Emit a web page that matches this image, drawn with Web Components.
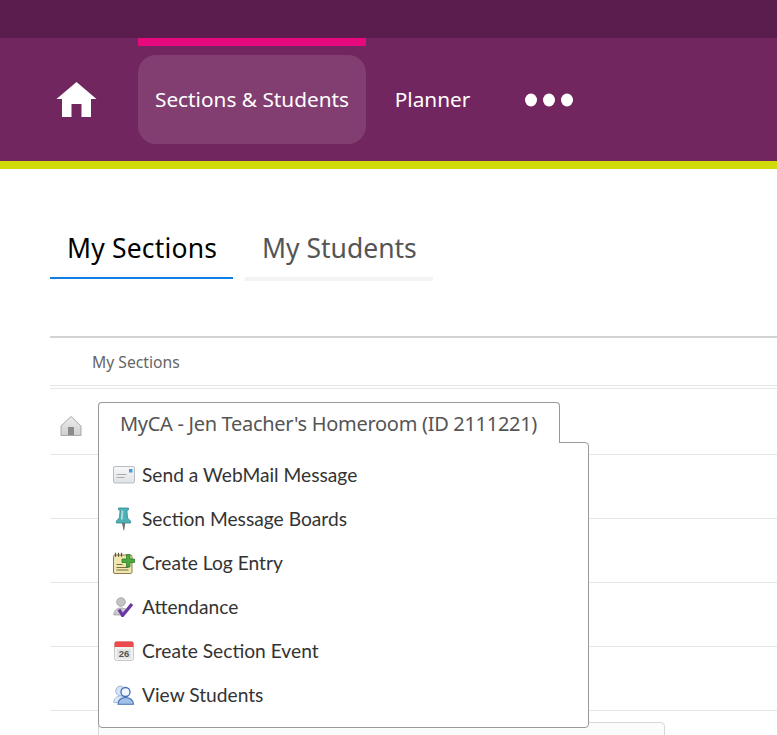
<!DOCTYPE html>
<html lang="en"><head><meta charset="utf-8"><title>My Sections</title>
<style>html,body{margin:0;padding:0;background:#fff;overflow:hidden;height:735px}</style></head>
<body>
<site-header>
  <nav-item type="home" label="Home"></nav-item>
  <nav-item active>Sections &amp; Students</nav-item>
  <nav-item>Planner</nav-item>
  <nav-item type="more" label="More"></nav-item>
</site-header>
<page-tabs>
  <tab-item active>My Sections</tab-item>
  <tab-item>My Students</tab-item>
</page-tabs>
<section-list heading="My Sections">
  <section-row home>
    <section-popup title-text="MyCA - Jen Teacher's Homeroom (ID 2111221)">
      <popup-item icon="mail">Send a WebMail Message</popup-item>
      <popup-item icon="pin">Section Message Boards</popup-item>
      <popup-item icon="log">Create Log Entry</popup-item>
      <popup-item icon="attend">Attendance</popup-item>
      <popup-item icon="cal">Create Section Event</popup-item>
      <popup-item icon="students">View Students</popup-item>
    </section-popup>
  </section-row>
  <section-row></section-row>
  <section-row></section-row>
  <section-row></section-row>
  <section-row></section-row>
  <section-row peek></section-row>
</section-list>
<script>
function shadow(el, html){ el.attachShadow({mode:'open'}).innerHTML = html; }

const ICONS = {
 mail:`<svg viewBox="0 0 22 18" width="22" height="18"><defs><linearGradient id="m" x1="0" y1="0" x2="0" y2="1"><stop offset="0" stop-color="#f7f8f9"/><stop offset="1" stop-color="#dfe2e5"/></linearGradient></defs><rect x=".5" y=".5" width="21" height="16.500" rx="1.500" fill="url(#m)" stroke="#b9bdc1"/><path d="M3.500 8.500h10M3.500 11.500h8" stroke="#a9adb2" fill="none"/><rect x="16" y="3" width="3.500" height="3.500" fill="#4a9be0"/></svg>`,
 pin:`<svg viewBox="0 0 18 24" width="18" height="24"><path d="M3.500 1h10v1.800l-1.600 1 .7 7.200 3 3.200v1.800H1.400V14l3-3.200.7-7.200-1.600-1z" fill="#4fb0b5" stroke="#2f8b92" stroke-width=".8"/><path d="M6.500 3.500h1.800l-.4 9H5.800z" fill="#a5dcdd"/><path d="M7 16h3.200L9.200 23.500h-.6z" fill="#6d6f72"/></svg>`,
 log:`<svg viewBox="0 0 22 22" width="22" height="22"><rect x=".5" y="3" width="18.500" height="18.500" rx="1.500" fill="#f0e6b0" stroke="#8f7a4d"/><path d="M2.500 .8v4M5.500 .8v4M8.500 .8v4" stroke="#5f5434" stroke-width="1.200"/><path d="M3.500 12.500h6M3.500 15.500h12M3.500 18h12" stroke="#77703f"/><path d="M13.500 2.500h3.500v4.500h4.500v3.500H17V15h-3.500v-4.500H9V7h4.500z" fill="#4aa93f" stroke="#2e7f2b" stroke-width=".8"/></svg>`,
 attend:`<svg viewBox="0 0 22 20" width="22" height="20"><circle cx="8" cy="5" r="4.300" fill="#c4c4c4" stroke="#949494" stroke-width=".7"/><path d="M.8 18c0-5 3-7 7.200-7s6 1.500 6.500 3l-4 4z" fill="#c9c9c9" stroke="#9b9b9b" stroke-width=".7"/><path d="M6 12.500l3.600 6L19 7" fill="none" stroke="#6a35a5" stroke-width="3.200"/></svg>`,
 cal:`<svg viewBox="0 0 20 20" width="20" height="20"><rect x=".5" y=".5" width="19" height="19" rx="2" fill="#f1f1f1" stroke="#c9c9c9"/><path d="M.5 6V2.500a2 2 0 0 1 2-2h15a2 2 0 0 1 2 2V6z" fill="#ed4b4b"/><rect x="3" y="8" width="14" height="9.500" fill="#e3e3e3"/><text x="10" y="16" text-anchor="middle" font-family="'Liberation Sans',sans-serif" font-weight="700" font-size="9.500" fill="#555">26</text></svg>`,
 students:`<svg viewBox="0 0 22 20" width="22" height="20"><circle cx="7.500" cy="6" r="4.800" fill="#d6e3f5" stroke="#9fb6d8"/><path d="M.8 17.500c0-4 3-6.500 6.500-6.500s5 2 5 6.500z" fill="#dde8f7" stroke="#a8bddc"/><circle cx="12.500" cy="7" r="4.500" fill="#f2f6fc" stroke="#3f6fb8" stroke-width="1.300"/><path d="M5 19.300c0-4.500 3.500-6.800 7.500-6.800S20.500 14.800 20.500 19.300z" fill="#a3c0e8" stroke="#3f6fb8" stroke-width="1.100"/></svg>`
};

customElements.define('site-header', class extends HTMLElement{
  constructor(){super();shadow(this,`<style>
   :host{display:block;background:#72265f;border-bottom:8px solid #d0d90a;border-top:38px solid #5b1c4e;font-family:"Noto Sans","Open Sans",sans-serif}
   nav{display:flex;height:123px;padding-left:40px;box-sizing:border-box}
  </style><nav><slot></slot></nav>`);}
});

customElements.define('nav-item', class extends HTMLElement{
  constructor(){super();
   const t=this.getAttribute('type');
   let inner='<span class="t"><slot></slot></span>';
   if(t==='home') inner=`<svg role="img" aria-label="Home" width="41" height="35" viewBox="0 0 41 35"><path d="M20.500 0L40.500 17H35V35H25.500V22H15.500V35H6V17H.5z" fill="#fff"/></svg>`;
   if(t==='more') inner=`<svg role="img" aria-label="More" width="50" height="14" viewBox="0 0 50 14"><ellipse cx="6" cy="7" rx="6" ry="6.500" fill="#fff"/><ellipse cx="24" cy="7" rx="6" ry="6.500" fill="#fff"/><ellipse cx="42" cy="7" rx="6" ry="6.500" fill="#fff"/></svg>`;
   shadow(this,`<style>
   :host{display:block;position:relative;color:#fff;font-size:20.800px;white-space:nowrap}
   .pill{display:flex;align-items:center;justify-content:center;box-sizing:border-box;height:89px;margin-top:17px;border-radius:18px}
   .t{display:block;margin-top:-2px}
   svg{display:block}
   :host([active]) .pill{background:rgba(255,255,255,.115);width:228px}
   :host([active])::before{content:"";display:block;position:absolute;left:0;right:0;top:0;height:8px;background:#e6097d}
   :host([type=home]) .pill{width:73px;margin-right:25px}
   :host(:not([active]):not([type])) .pill{width:75px;margin:17px 55px 0 29px}
   :host([type=more]) .pill{width:50px}
   </style><div class="pill">${inner}</div>`);}
});

customElements.define('page-tabs', class extends HTMLElement{
  constructor(){super();shadow(this,`<style>
   :host{display:flex;gap:12px;padding:54px 0 0 50px;height:58px;font-family:"Noto Sans","Open Sans",sans-serif}
  </style><slot></slot>`);}
});

customElements.define('tab-item', class extends HTMLElement{
  constructor(){super();shadow(this,`<style>
   :host{display:block;box-sizing:border-box;height:58px;padding:0 17px;line-height:50px;font-size:26.500px;color:#555;border-bottom:4px solid #f3f3f3;width:188px;white-space:nowrap}
   :host([active]){color:#000;border-bottom:2px solid #0f7ee6;height:56px;width:183px;letter-spacing:.18px}
  </style><slot></slot>`);}
});

customElements.define('section-list', class extends HTMLElement{
  constructor(){super();shadow(this,`<style>
   :host{display:block;margin:55px 0 0 50px;border-top:2px solid #d2d2d2}
   h2{margin:0;height:48px;box-sizing:border-box;padding-left:42px;font:400 15.700px/49px "Noto Sans","Open Sans",sans-serif;color:#666;border-bottom:1px solid #e6e6e6}
   .gap{height:2px;border-bottom:1px solid #e6e6e6}
  </style><h2></h2><div class="gap"></div><slot></slot>`);
  this.shadowRoot.querySelector('h2').textContent=this.getAttribute('heading');}
});

customElements.define('section-row', class extends HTMLElement{
  constructor(){super();
   shadow(this,`<style>
   :host{display:block;position:relative;box-sizing:border-box;height:64px;border-bottom:1px solid #e6e6e6}
   :host(:first-of-type){height:66px}
   svg{position:absolute;left:10px;top:26px}
   .peek{position:absolute;left:48px;top:11px;width:567px;height:40px;box-sizing:border-box;border:1px solid #d8d8d8;border-radius:4px;background:#fcfcfc}
   :host([peek]){border:0;height:24px;overflow:hidden}
   </style>${this.hasAttribute('home')?`<svg width="22" height="22" viewBox="0 0 22 22" aria-hidden="true"><defs><linearGradient id="h" x1="0" y1="0" x2="0" y2="1"><stop offset="0" stop-color="#ededed"/><stop offset="1" stop-color="#cfcfcf"/></linearGradient></defs><path d="M11 1.500L21 11v9.500H1V11z" fill="url(#h)" stroke="#a9a9a9"/><rect x="8" y="12" width="6" height="8" fill="#8a8a8a"/></svg>`:''}${this.hasAttribute('peek')?'<div class="peek"></div>':''}<slot></slot>`);}
});

customElements.define('section-popup', class extends HTMLElement{
  constructor(){super();shadow(this,`<style>
   :host{display:block;position:absolute;left:48px;top:13px;width:491px;z-index:2}
   .title{position:relative;z-index:1;box-sizing:border-box;width:462px;height:41px;margin-bottom:-1px;padding-left:21px;background:#fff;border:1px solid #999;border-bottom:0;border-radius:4px 4px 0 0;font:400 20px/41px "Noto Sans","Open Sans",sans-serif;letter-spacing:-.3px;color:#555;white-space:nowrap}
   .menu{box-sizing:border-box;height:286px;padding-top:10px;background:#fff;border:1px solid #999;border-radius:0 4px 4px 4px;}
  </style><div class="title"></div><div class="menu"><slot></slot></div>`);
  this.shadowRoot.querySelector('.title').textContent=this.getAttribute('title-text');}
});

customElements.define('popup-item', class extends HTMLElement{
  constructor(){super();shadow(this,`<style>
   :host{display:flex;align-items:center;height:44px;font:400 19.200px/44px Lato,"Noto Sans",sans-serif;color:#333;white-space:nowrap}
   .i{width:43px;flex:none;display:flex;justify-content:center;padding-left:7px;box-sizing:border-box}
   .i svg{display:block}
  </style><span class="i">${ICONS[this.getAttribute('icon')]}</span><slot></slot>`);}
});
</script>
</body></html>
